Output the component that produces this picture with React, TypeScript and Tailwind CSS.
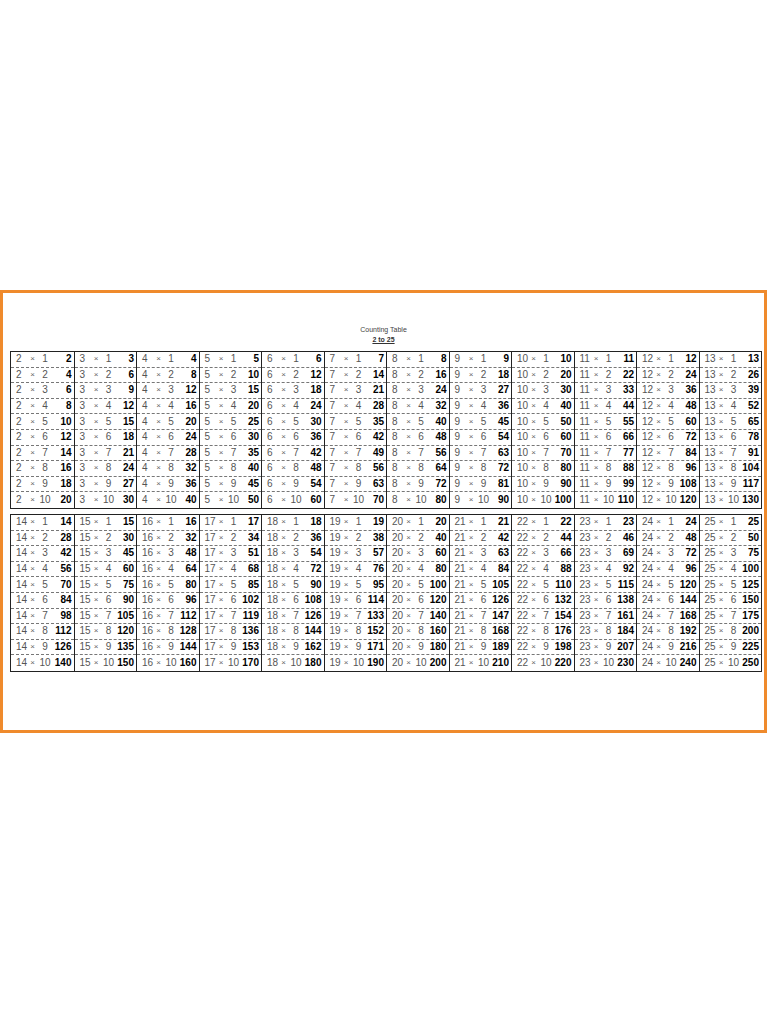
import React from "react";

const font = { fontFamily: '"Liberation Sans", Arial, sans-serif' };

function Cell({ a, b, last }: { a: number; b: number; last: boolean }) {
  return (
    <div
      className={
        "flex items-center h-[15.6px] text-[10px] leading-none pl-[5px] pr-[2px] " +
        (last ? "" : "border-b border-dashed border-[#777]")
      }
    >
      <span className="w-[12px] text-[#555]">{a}</span>
      <span className="w-[9px] text-center text-[#666] text-[8px]">×</span>
      <span className="w-[16px] text-center text-[#555]">{b}</span>
      <span className="flex-1 text-right font-bold text-black">{a * b}</span>
    </div>
  );
}

function Table({ from }: { from: number }) {
  const cols = Array.from({ length: 12 }, (_, i) => from + i);
  const rows = Array.from({ length: 10 }, (_, i) => i + 1);
  return (
    <div className="grid grid-cols-12 border-[1.5px] border-[#222] w-[752px] ml-[7px]">
      {cols.map((a, ci) => (
        <div key={a} className={ci === 0 ? "" : "border-l-[1.5px] border-[#222]"}>
          {rows.map((b) => (
            <Cell key={b} a={a} b={b} last={b === 10} />
          ))}
        </div>
      ))}
    </div>
  );
}

export default function App() {
  return (
    <div className="w-[768px] h-[1024px] bg-white pt-[290px]" style={font}>
      <div className="w-[767px] h-[443px] border-[3px] border-[#ef8a2c] bg-white">
        <div className="flex flex-col items-center pt-[32px] text-[7px] leading-[10px] text-[#444]">
          <div>Counting Table</div>
          <div className="underline font-bold text-[#333]">2 to 25</div>
        </div>
        <div className="mt-[6px]">
          <Table from={2} />
        </div>
        <div className="mt-[5px]">
          <Table from={14} />
        </div>
      </div>
    </div>
  );
}
